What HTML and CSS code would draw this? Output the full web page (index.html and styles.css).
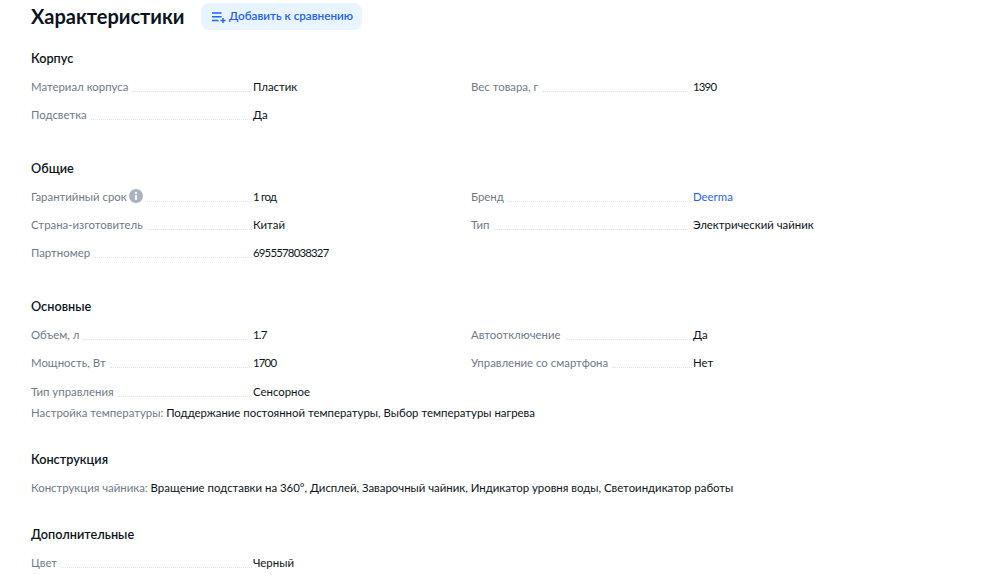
FILE: index.html
```html
<!DOCTYPE html>
<html lang="ru">
<head>
<meta charset="utf-8">
<title>Характеристики</title>
<link rel="stylesheet" href="styles.css">
</head>
<body>
<main class="page">
  <header class="head">
    <h1 class="title">Характеристики</h1>
    <button class="compare" type="button">
      <svg class="compare-icon" width="14" height="12" viewBox="0 0 14 12" aria-hidden="true"><path d="M0 2h9.5M0 5.7h9.5M0 9.5h6.5M8.5 9.5h5M11 7v5" fill="none" stroke="#1f5fff" stroke-width="1.4"/></svg>
      <span class="compare-text">Добавить к сравнению</span>
    </button>
  </header>

  <section class="group">
    <h2 class="group-title">Корпус</h2>
    <div class="grid">
      <div class="row"><div class="lead"><span class="label">Материал корпуса</span><i class="dots"></i></div><span class="value">Пластик</span></div>
      <div class="row"><div class="lead"><span class="label">Вес товара, г</span><i class="dots"></i></div><span class="value num">1390</span></div>
      <div class="row"><div class="lead"><span class="label">Подсветка</span><i class="dots"></i></div><span class="value">Да</span></div>
    </div>
  </section>

  <section class="group">
    <h2 class="group-title">Общие</h2>
    <div class="grid">
      <div class="row"><div class="lead"><span class="label">Гарантийный срок</span><svg class="info" width="14" height="14" viewBox="0 0 14 14" aria-hidden="true"><circle cx="7" cy="7" r="7" fill="#a9b3c0"/><circle cx="7" cy="3.9" r="1.1" fill="#fff"/><rect x="6" y="5.9" width="2" height="4.8" fill="#fff"/></svg><i class="dots"></i></div><span class="value num">1 год</span></div>
      <div class="row"><div class="lead"><span class="label">Бренд</span><i class="dots"></i></div><a class="value link" href="#">Deerma</a></div>
      <div class="row"><div class="lead"><span class="label">Страна-изготовитель</span><i class="dots"></i></div><span class="value">Китай</span></div>
      <div class="row"><div class="lead"><span class="label">Тип</span><i class="dots"></i></div><span class="value">Электрический чайник</span></div>
      <div class="row"><div class="lead"><span class="label">Партномер</span><i class="dots"></i></div><span class="value num">6955578038327</span></div>
    </div>
  </section>

  <section class="group">
    <h2 class="group-title">Основные</h2>
    <div class="grid">
      <div class="row"><div class="lead"><span class="label">Объем, л</span><i class="dots"></i></div><span class="value num">1.7</span></div>
      <div class="row"><div class="lead"><span class="label">Автоотключение</span><i class="dots"></i></div><span class="value">Да</span></div>
      <div class="row"><div class="lead"><span class="label">Мощность, Вт</span><i class="dots"></i></div><span class="value num">1700</span></div>
      <div class="row"><div class="lead"><span class="label">Управление со смартфона</span><i class="dots"></i></div><span class="value">Нет</span></div>
      <div class="row row-last"><div class="lead"><span class="label">Тип управления</span><i class="dots"></i></div><span class="value">Сенсорное</span></div>
    </div>
    <p class="inline"><span class="label">Настройка температуры:</span> Поддержание постоянной температуры, Выбор температуры нагрева</p>
  </section>

  <section class="group">
    <h2 class="group-title">Конструкция</h2>
    <p class="inline inline-solo"><span class="label">Конструкция чайника:</span> Вращение подставки на 360°, Дисплей, Заварочный чайник, Индикатор уровня воды, Светоиндикатор работы</p>
  </section>

  <section class="group">
    <h2 class="group-title">Дополнительные</h2>
    <div class="grid">
      <div class="row"><div class="lead"><span class="label">Цвет</span><i class="dots"></i></div><span class="value">Черный</span></div>
    </div>
  </section>
</main>
</body>
</html>
```
FILE: styles.css
```css
html, body { margin: 0; padding: 0; background: #fff; overflow: hidden; }
body { font-family: "Lato", "Noto Sans", sans-serif; color: #0b1420; font-size: 11.4px; }
.page { padding: 3px 0 0 31px; height: 572px; overflow: hidden; display: flex; flex-direction: column; gap: 30px; }
.head { display: flex; align-items: center; gap: 16px; height: 27px; margin-bottom: -11px; }
.title { margin: 0; font-size: 20px; font-weight: 700; line-height: 27px; width: 154px; white-space: nowrap; }
.compare { display: inline-flex; align-items: center; gap: 3px; height: 27px; width: 161px; padding: 0 0 0 11px; border: 0; border-radius: 8px; background: #e8f4ff; color: #1f5fff; font: 600 11.7px "Lato", sans-serif; white-space: nowrap; }
.compare-icon { flex: none; }
.compare-text { margin-bottom: 3px; }
.group-title { margin: 0; font-size: 12.7px; font-weight: 600; line-height: 18px; }
.grid { display: grid; grid-template-columns: 440px 440px; grid-auto-rows: 28px; margin-top: 6px; }
.row { display: grid; grid-template-columns: 222px 1fr; align-items: center; padding-bottom: 2px; box-sizing: border-box; }
.row-last { padding-bottom: 0; }
.lead { display: flex; align-items: center; min-width: 0; }
.label { color: #6f7a85; white-space: nowrap; }
.info { flex: none; margin-left: 2px; }
.dots { flex: 1; height: 0; border-bottom: 1px dotted #d8e4f1; margin: 11px 1px 0 4px; }
.value { white-space: nowrap; color: #0b1420; }
.num { letter-spacing: -0.8px; }
.link { color: #1f5fff; text-decoration: none; }
.inline { margin: 1px 0 0; line-height: 14px; white-space: nowrap; }
.inline-solo { margin-top: 13px; }
```
